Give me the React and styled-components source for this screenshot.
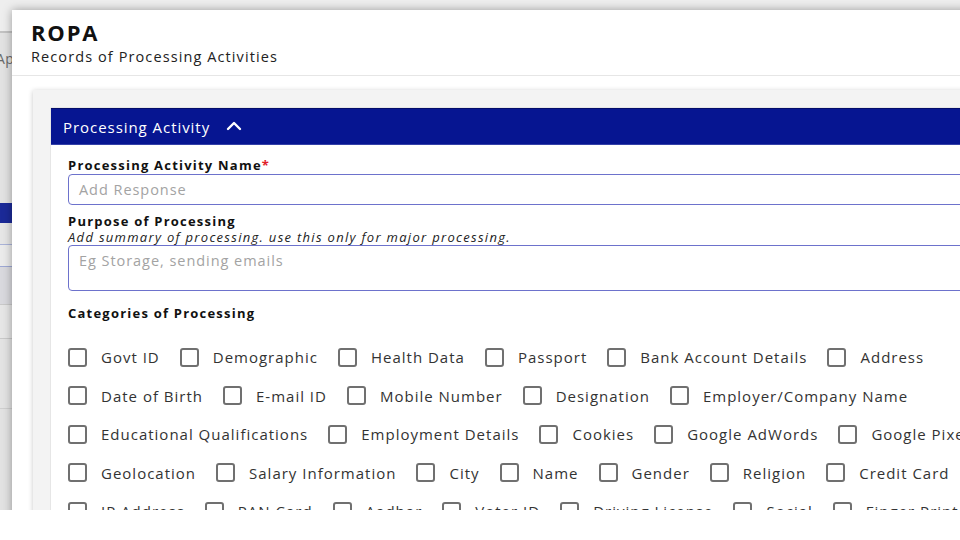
import React from "react";
import styled, { createGlobalStyle } from "styled-components";
import { ChevronUp } from "lucide-react";

const font = `"Open Sans", "Liberation Sans", sans-serif`;

const Global = createGlobalStyle`
  html, body {
    margin: 0;
    padding: 0;
    background: #fff;
  }
  * {
    box-sizing: border-box;
  }
`;

const Frame = styled.div`
  width: 960px;
  height: 540px;
  background: #fff;
  overflow: hidden;
`;

const Screen = styled.div`
  position: relative;
  width: 960px;
  height: 510px;
  overflow: hidden;
  background: #e2e2e2;
  font-family: ${font};
`;

/* dimmed page behind the modal */
const BackPage = styled.div`
  display: flex;
  flex-direction: column;
  width: 100%;
`;

const BackTop = styled.div`
  height: 33px;
  background: #eeeeee;
  border-bottom: 2px solid #c2c2c2;
`;

const BackTitle = styled.div`
  height: 60px;
  padding: 16px 0 0 0;
  font-size: 14px;
  color: #6a6a6a;
  letter-spacing: 0.5px;
  margin-left: -4px;
`;

const BackGap = styled.div`
  height: ${p => p.h}px;
  background: ${p => p.bg || "transparent"};
  border-bottom: ${p => (p.line ? `1px solid ${p.line}` : "none")};
`;

const BackTab = styled.div`
  height: 20px;
  background: #1b2a98;
  color: #fff;
  font-size: 14px;
  font-weight: 600;
  display: flex;
  align-items: center;
  justify-content: flex-end;
`;

const Modal = styled.div`
  position: absolute;
  left: 12px;
  top: 10px;
  width: 1020px;
  height: 700px;
  background: #fff;
  box-shadow: 0 0 9px rgba(0, 0, 0, 0.35);
  display: flex;
  flex-direction: column;
`;

const ModalHeader = styled.div`
  height: 66px;
  padding: 9px 19px 0;
  border-bottom: 1px solid #e6e6e6;
`;

const Title = styled.h1`
  margin: 0;
  font-size: 22px;
  line-height: 26px;
  font-weight: 700;
  color: #111;
  letter-spacing: 1.8px;
`;

const Subtitle = styled.div`
  margin-top: 3px;
  font-size: 14.5px;
  line-height: 18px;
  color: #222;
  letter-spacing: 1.1px;
`;

const ModalBody = styled.div`
  padding: 14px 0 0 21px;
`;

const Card = styled.div`
  background: #f3f3f3;
  padding: 18px;
  box-shadow: 0 1px 5px rgba(0, 0, 0, 0.22);
`;

const Accordion = styled.div`
  background: #fff;
  box-shadow: 0 0 1px rgba(0, 0, 0, 0.3);
`;

const AccordionHead = styled.div`
  height: 37px;
  background: #061591;
  border-top: 1px solid #030c6a;
  border-bottom: 1px solid #3440a8;
  display: flex;
  align-items: center;
  padding-left: 12px;
  color: #fff;
  font-size: 15px;
  letter-spacing: 0.95px;
`;

const Chevron = styled(ChevronUp)`
  margin-left: 12px;
  margin-top: -1px;
`;

const AccordionBody = styled.div`
  padding: 11px 17px 40px;
`;

const FieldLabel = styled.div`
  font-size: 13px;
  line-height: 18px;
  font-weight: 700;
  color: #111;
  letter-spacing: 1.22px;
  margin-top: ${p => p.top || 0}px;
`;

const Required = styled.span`
  color: #e0202a;
`;

const Help = styled.div`
  font-size: 13px;
  line-height: 15px;
  font-style: italic;
  color: #222;
  letter-spacing: 1.3px;
`;

const Input = styled.div`
  height: ${p => p.h}px;
  border: 1px solid #6d72cc;
  border-radius: 4px;
  padding: ${p => (p.multi ? "5px 10px" : "0 10px")};
  display: flex;
  align-items: ${p => (p.multi ? "flex-start" : "center")};
  font-size: 14.5px;
  color: #a3a3a3;
  letter-spacing: 0.95px;
  margin-top: ${p => p.top || 0}px;
`;

const Categories = styled.div`
  display: flex;
  flex-direction: column;
  gap: 18.5px;
  margin-top: 25px;
`;

const Row = styled.div`
  display: flex;
  align-items: center;
  height: 20px;
  white-space: nowrap;
`;

const Option = styled.label`
  display: flex;
  align-items: center;
  margin-right: 20px;
  font-size: 15px;
  color: #333;
  letter-spacing: 1px;
`;

const Box = styled.span`
  width: 19px;
  height: 19px;
  border: 2px solid #707070;
  border-radius: 3px;
  margin-right: 14px;
  flex-shrink: 0;
`;

const rows = [
  ["Govt ID", "Demographic", "Health Data", "Passport", "Bank Account Details", "Address"],
  ["Date of Birth", "E-mail ID", "Mobile Number", "Designation", "Employer/Company Name"],
  ["Educational Qualifications", "Employment Details", "Cookies", "Google AdWords", "Google Pixel"],
  ["Geolocation", "Salary Information", "City", "Name", "Gender", "Religion", "Credit Card"],
  ["IP Address", "PAN Card", "Aadhar", "Voter ID", "Driving License", "Social", "Finger Print"]
];

export default function App() {
  return (
    <Frame>
      <Global />
      <Screen>
        <BackPage>
          <BackTop />
          <BackTitle>Ap</BackTitle>
          <BackGap h={110} />
          <BackTab>m</BackTab>
          <BackGap h={22} bg="#e6e6e6" line="#aab3d8" />
          <BackGap h={22} bg="#ebebeb" line="#9ea8d4" />
          <BackGap h={38} bg="#d9d9de" line="#c9c9c9" />
          <BackGap h={34} bg="#e6e6e6" line="#c9c9c9" />
          <BackGap h={70} bg="#e3e3e3" line="#cfcfcf" />
        </BackPage>

        <Modal>
          <ModalHeader>
            <Title>ROPA</Title>
            <Subtitle>Records of Processing Activities</Subtitle>
          </ModalHeader>
          <ModalBody>
            <Card>
              <Accordion>
                <AccordionHead>
                  Processing Activity
                  <Chevron size={24} strokeWidth={2.4} />
                </AccordionHead>
                <AccordionBody>
                  <FieldLabel>
                    Processing Activity Name<Required>*</Required>
                  </FieldLabel>
                  <Input h={31}>Add Response</Input>
                  <FieldLabel top={7}>Purpose of Processing</FieldLabel>
                  <Help>Add summary of processing. use this only for major processing.</Help>
                  <Input h={46} multi>
                    Eg Storage, sending emails
                  </Input>
                  <FieldLabel top={13}>Categories of Processing</FieldLabel>
                  <Categories>
                    {rows.map((row, i) => (
                      <Row key={i}>
                        {row.map(name => (
                          <Option key={name}>
                            <Box />
                            {name}
                          </Option>
                        ))}
                      </Row>
                    ))}
                  </Categories>
                </AccordionBody>
              </Accordion>
            </Card>
          </ModalBody>
        </Modal>
      </Screen>
    </Frame>
  );
}
